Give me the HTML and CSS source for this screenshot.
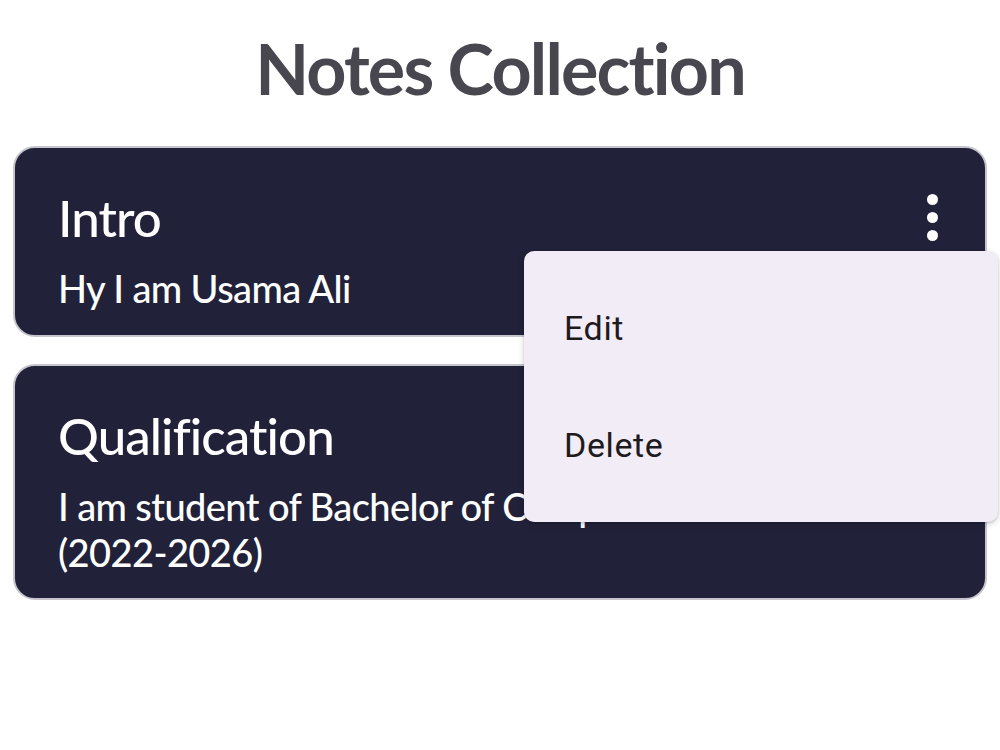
FILE: index.html
```html
<!DOCTYPE html>
<html lang="en">
<head>
<meta charset="utf-8">
<title>Notes Collection</title>
<link rel="stylesheet" href="styles.css">
</head>
<body>
<h1 class="title">Notes Collection</h1>
<div class="list">
  <div class="card">
    <div class="card-head">
      <h2 class="card-title">Intro</h2>
      <span class="more"><i></i><i></i><i></i></span>
    </div>
    <p class="card-body">Hy I am Usama Ali</p>
  </div>
  <div class="card">
    <div class="card-head">
      <h2 class="card-title">Qualification</h2>
      <span class="more"><i></i><i></i><i></i></span>
    </div>
    <p class="card-body">I am student of Bachelor of Computer Science<br>(2022-2026)</p>
  </div>
</div>
<div class="menu">
  <div class="menu-item">Edit</div>
  <div class="menu-item">Delete</div>
</div>
</body>
</html>
```

FILE: styles.css
```css
html, body {
  margin: 0;
  padding: 0;
  background: #ffffff;
}
body {
  width: 1000px;
  height: 750px;
  overflow: hidden;
  position: relative;
  font-family: Lato, "Open Sans", sans-serif;
  font-variant-ligatures: none;
}
.title {
  margin: 26px 0 36px;
  text-align: center;
  font-size: 70px;
  line-height: 1.2;
  font-weight: 700;
  letter-spacing: -1.8px;
  color: #48474f;
}
.list {
  display: flex;
  flex-direction: column;
  gap: 27px;
  padding: 0 13px;
}
.card {
  background: #21223a;
  border: 2px solid #c6c5cd;
  border-radius: 22px;
  padding: 39px 45px 23px 43px;
}
.card-head {
  display: flex;
  align-items: center;
  justify-content: space-between;
}
.card-title {
  margin: 0;
  font-size: 51px;
  line-height: 1.2;
  font-weight: 500;
  letter-spacing: -0.9px;
  color: #ffffff;
}
.card-body {
  margin: 18px 0 0;
  font-size: 38px;
  line-height: 1.2;
  font-weight: 500;
  letter-spacing: -0.6px;
  color: #ffffff;
}
.more {
  display: flex;
  flex-direction: column;
  gap: 7px;
  width: 16px;
  align-items: center;
}
.more i {
  display: block;
  width: 11px;
  height: 11px;
  border-radius: 50%;
  background: #ffffff;
}
.menu {
  position: absolute;
  left: 524px;
  top: 251px;
  width: 474px;
  height: 271px;
  box-sizing: border-box;
  padding: 18px 0;
  background: #f2ecf6;
  border-radius: 10px;
  box-shadow: 0 2px 6px rgba(0, 0, 0, 0.18), 0 1px 2px rgba(0, 0, 0, 0.12);
  font-family: Roboto, sans-serif;
}
.menu-item {
  height: 117px;
  display: flex;
  align-items: center;
  padding-left: 40px;
  font-size: 34px;
  letter-spacing: 0.6px;
  color: #1d1b20;
}
```
